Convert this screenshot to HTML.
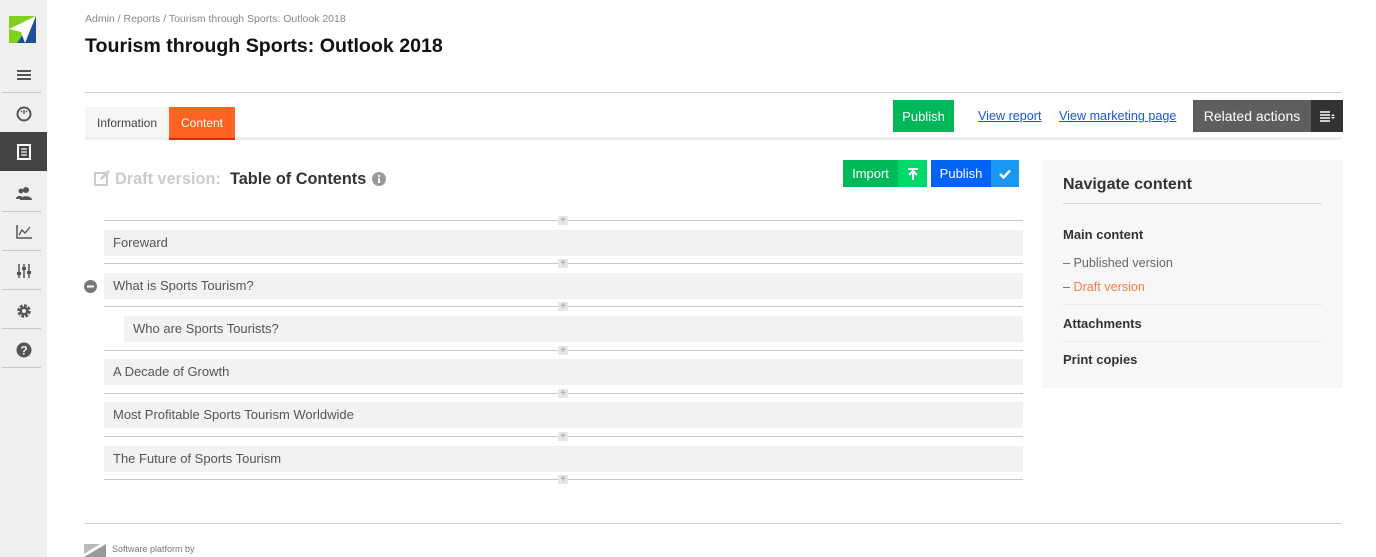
<!DOCTYPE html>
<html><head><style>
*{margin:0;padding:0;box-sizing:border-box}
body{width:1376px;height:557px;overflow:hidden;background:#fff;font-family:"Liberation Sans",sans-serif;position:relative}
.a{position:absolute}
.side{left:0;top:0;width:47px;height:557px;background:#efefef}
.ic{left:0;width:47px;height:39px;display:flex;align-items:center;justify-content:center}
.sep{left:2px;width:39px;height:1px;background:#c8c8c8}
.row{left:104px;width:919px;height:26px;background:#f2f2f2;font-size:13px;color:#555;line-height:26px;padding-left:9px}
.hl{left:104px;width:919px;height:1px;background:#c8c8c8}
.pl{left:558px;width:10px;height:9px;background:#e6e6e6;color:#999;font-size:10px;line-height:9px;text-align:center}
</style></head><body>
<div class="a side"></div>
<svg class="a" style="left:9px;top:16px" width="27" height="27"><rect width="27" height="27" fill="#7fd11b"/><polygon points="27,0 27,27 8,27" fill="#1e4d9a"/><polygon points="27,0 0,13 12,16 16,27" fill="#fff"/></svg>
<div class="a ic" style="top:55px"><svg width="14" height="12"><rect y="1" width="14" height="2" fill="#555"/><rect y="5" width="14" height="2" fill="#555"/><rect y="9" width="14" height="2" fill="#555"/></svg></div>
<div class="a sep" style="top:92px"></div>
<div class="a ic" style="top:94px"><svg width="16" height="16"><circle cx="8" cy="8" r="6.5" fill="none" stroke="#555" stroke-width="2"/><path d="M8 8 L8 4 M5 5l1 1M11 5l-1 1" stroke="#555" stroke-width="1.5"/></svg></div>
<div class="a ic" style="top:132px;background:#444"><svg width="14" height="16"><rect x="1" y="1" width="12" height="14" fill="none" stroke="#fff" stroke-width="2"/><path d="M4 5h6M4 8h6M4 11h6" stroke="#fff" stroke-width="1.3"/></svg></div>
<div class="a ic" style="top:173px"><svg width="18" height="14"><circle cx="11" cy="4" r="3" fill="#555"/><path d="M5 14c0-5 12-5 12 0z" fill="#555"/><circle cx="6" cy="5" r="2.5" fill="#555"/><path d="M1 13c0-4 7-4 7 0z" fill="#555"/></svg></div>
<div class="a sep" style="top:211px"></div>
<div class="a ic" style="top:212px"><svg width="16" height="14"><path d="M1 0v13h15" fill="none" stroke="#555" stroke-width="1.5"/><path d="M3 10l3-5 3 3 5-6" fill="none" stroke="#555" stroke-width="1.3"/></svg></div>
<div class="a sep" style="top:250px"></div>
<div class="a ic" style="top:251px"><svg width="16" height="16"><path d="M3 1v14M8 1v14M13 1v14" stroke="#555" stroke-width="1.5"/><rect x="1" y="9" width="4" height="3" fill="#555"/><rect x="6" y="4" width="4" height="3" fill="#555"/><rect x="11" y="8" width="4" height="3" fill="#555"/></svg></div>
<div class="a sep" style="top:289px"></div>
<div class="a ic" style="top:291px"><svg width="16" height="16"><circle cx="8" cy="8" r="5" fill="none" stroke="#555" stroke-width="3.5" stroke-dasharray="2.6 1.3"/><circle cx="8" cy="8" r="4.5" fill="#555"/><circle cx="8" cy="8" r="2" fill="#efefef"/></svg></div>
<div class="a sep" style="top:328px"></div>
<div class="a ic" style="top:330px"><svg width="16" height="16"><circle cx="8" cy="8" r="7.5" fill="#555"/><text x="8" y="12.5" font-size="12" font-weight="bold" fill="#efefef" text-anchor="middle" font-family="Liberation Sans">?</text></svg></div>
<div class="a sep" style="top:367px"></div>

<div class="a" style="left:85px;top:13px;font-size:10.5px;color:#888">Admin / Reports / Tourism through Sports: Outlook 2018</div>
<div class="a" style="left:85px;top:35px;font-size:19.6px;font-weight:bold;color:#111">Tourism through Sports: Outlook 2018</div>
<div class="a" style="left:84px;top:92px;width:1258px;height:1px;background:#d0d0d0"></div>
<div class="a" style="left:85px;top:137px;width:1257px;height:3px;background:#eee"></div>
<div class="a" style="left:85px;top:107px;width:84px;height:30px;background:#f6f6f6;font-size:12px;color:#444;line-height:32px;text-align:center">Information</div>
<div class="a" style="left:169px;top:107px;width:66px;height:33px;background:#ff6322;border-bottom:2px solid #e8240c;font-size:12px;color:#fff;line-height:32px;text-align:center">Content</div>
<div class="a" style="left:893px;top:100px;width:61px;height:32px;background:#00b85a;color:#fff;font-size:13px;line-height:33px;text-align:center">Publish</div>
<div class="a" style="left:978px;top:109px;font-size:12.6px;color:#1a56e0;text-decoration:underline">View report</div>
<div class="a" style="left:1059px;top:109px;font-size:12.6px;color:#1a56e0;text-decoration:underline">View marketing page</div>
<div class="a" style="left:1193px;top:100px;width:118px;height:32px;background:#5e5e5e;color:#fff;font-size:14px;line-height:32px;text-align:center">Related actions</div>
<div class="a" style="left:1311px;top:100px;width:32px;height:32px;background:#333;display:flex;align-items:center;justify-content:center"><svg width="16" height="12"><path d="M1 2h10M1 5h10M1 8h10M1 11h10" stroke="#fff" stroke-width="1.6"/><path d="M12 6l2-2 2 2zM12 7l2 2 2-2z" fill="#fff"/></svg></div>

<svg class="a" style="left:94px;top:170px" width="16" height="16"><rect x="1" y="3" width="12" height="12" fill="none" stroke="#ccc" stroke-width="2"/><path d="M6 10l1-3 7-7 2 2-7 7z" fill="#ccc"/></svg>
<div class="a" style="left:115px;top:170px;font-size:16.3px;font-weight:bold;color:#ccc">Draft version:</div>
<div class="a" style="left:230px;top:170px;font-size:16.3px;font-weight:bold;color:#333">Table of Contents</div>
<svg class="a" style="left:372px;top:172px" width="14" height="14"><circle cx="7" cy="7" r="7" fill="#999"/><rect x="6" y="6" width="2" height="5" fill="#fff"/><rect x="6" y="3" width="2" height="2" fill="#fff"/></svg>
<div class="a" style="left:843px;top:160px;width:55px;height:27px;background:#00b85a;color:#fff;font-size:13px;line-height:28px;text-align:center">Import</div>
<div class="a" style="left:898px;top:160px;width:29px;height:27px;background:#00d86a;display:flex;align-items:center;justify-content:center"><svg width="12" height="12"><path d="M1 1h10M6 12V4M2 7l4-4 4 4" fill="none" stroke="#fff" stroke-width="2"/></svg></div>
<div class="a" style="left:931px;top:160px;width:60px;height:27px;background:#0063f5;color:#fff;font-size:13px;line-height:28px;text-align:center">Publish</div>
<div class="a" style="left:991px;top:160px;width:28px;height:27px;background:#1a96f5;display:flex;align-items:center;justify-content:center"><svg width="12" height="10"><path d="M1 5l3.5 3.5L11 1.5" fill="none" stroke="#fff" stroke-width="2.4"/></svg></div>

<div class="a hl" style="top:220px"></div><div class="a pl" style="top:216px">+</div>
<div class="a row" style="top:230px">Foreward</div>
<div class="a hl" style="top:263px"></div><div class="a pl" style="top:259px">+</div>
<div class="a row" style="top:273px">What is Sports Tourism?</div>
<svg class="a" style="left:84px;top:280px" width="13" height="13"><circle cx="6.5" cy="6.5" r="6.5" fill="#777"/><rect x="3" y="5.5" width="7" height="2" fill="#fff"/></svg>
<div class="a hl" style="top:306px"></div><div class="a pl" style="top:302px">+</div>
<div class="a row" style="top:316px;left:124px;width:899px">Who are Sports Tourists?</div>
<div class="a hl" style="top:350px"></div><div class="a pl" style="top:346px">+</div>
<div class="a row" style="top:359px">A Decade of Growth</div>
<div class="a hl" style="top:393px"></div><div class="a pl" style="top:389px">+</div>
<div class="a row" style="top:402px">Most Profitable Sports Tourism Worldwide</div>
<div class="a hl" style="top:436px"></div><div class="a pl" style="top:432px">+</div>
<div class="a row" style="top:446px">The Future of Sports Tourism</div>
<div class="a hl" style="top:479px"></div><div class="a pl" style="top:475px">+</div>

<div class="a" style="left:1042px;top:160px;width:301px;height:228px;background:#f7f7f7"></div>
<div class="a" style="left:1063px;top:176px;font-size:16px;font-weight:bold;color:#333">Navigate content</div>
<div class="a" style="left:1063px;top:203px;width:259px;height:1px;background:#d8d8d8"></div>
<div class="a" style="left:1063px;top:227px;font-size:13px;font-weight:bold;color:#333">Main content</div>
<div class="a" style="left:1063px;top:256px;font-size:12.6px;color:#666">– Published version</div>
<div class="a" style="left:1063px;top:280px;font-size:12.6px;color:#666">– <span style="color:#ff7a4a">Draft version</span></div>
<div class="a" style="left:1063px;top:304px;width:259px;height:1px;background:#e8e8e8"></div>
<div class="a" style="left:1063px;top:316px;font-size:13px;font-weight:bold;color:#333">Attachments</div>
<div class="a" style="left:1063px;top:341px;width:259px;height:1px;background:#e8e8e8"></div>
<div class="a" style="left:1063px;top:352px;font-size:13px;font-weight:bold;color:#333">Print copies</div>

<div class="a" style="left:84px;top:523px;width:1258px;height:1px;background:#d0d0d0"></div>
<svg class="a" style="left:84px;top:544px" width="22" height="13"><polygon points="0,13 22,0 22,13" fill="#999"/><polygon points="0,0 16,0 0,10" fill="#bbb"/></svg>
<div class="a" style="left:112px;top:544px;font-size:9px;color:#777">Software platform by</div>
</body></html>
